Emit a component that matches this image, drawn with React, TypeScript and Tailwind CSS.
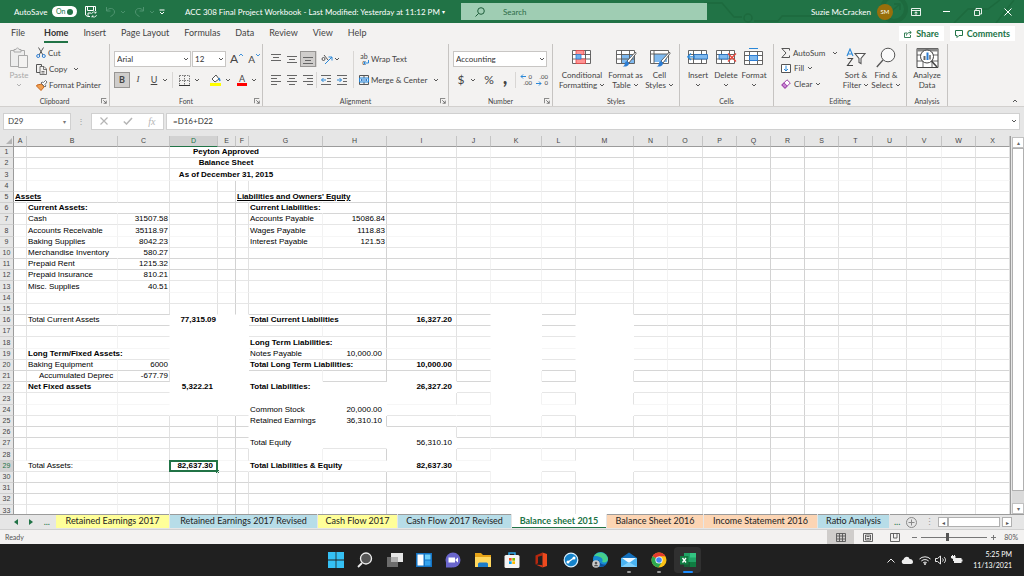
import type { ReactNode } from "react"
import clsx from "clsx"

/* ---------- small shared pieces ---------- */

const Chevron = ({ className }: { className?: string }) => (
  <svg viewBox="0 0 6 6" className={clsx("size-1.5 shrink-0", className)} fill="none" stroke="currentColor" strokeWidth=".9">
    <path d="M1 2l2 2 2-2" />
  </svg>
)

const Launcher = () => (
  <svg viewBox="0 0 8 8" className="size-1.5" fill="none" stroke="#555">
    <path d="M.5 7V.5H7M3 3l4 4M7 3.5V7H3.5" />
  </svg>
)

const Divider = () => <span className="h-4 w-px shrink-0 bg-[#d8d6d4]" />

interface GroupProps {
  label: string
  className: string
  launcher?: boolean
  children: ReactNode
}

const Group = ({ label, className, launcher, children }: GroupProps) => (
  <section className={clsx("relative flex shrink-0 flex-col border-r border-[#c6c4c2]", className)}>
    <div className="min-h-0 flex-1">{children}</div>
    <div className="text-center text-[7px] leading-[10px] text-[#444]">{label}</div>
    {launcher && (
      <button aria-label={`${label} settings`} className="absolute right-0.5 bottom-0.5">
        <Launcher />
      </button>
    )}
  </section>
)

interface BigButtonProps {
  lines: string[]
  icon: ReactNode
  className: string
  chevron?: "inline" | "below"
}

const BigButton = ({ lines, icon, className, chevron }: BigButtonProps) => (
  <button className={clsx("flex shrink-0 flex-col items-center whitespace-nowrap text-[8px] leading-[10px]", className)}>
    <span className="flex h-6 items-center">{icon}</span>
    {lines.map((line, i) => (
      <span key={line} className="flex items-center gap-0.5">
        {line}
        {chevron === "inline" && i === lines.length - 1 && <Chevron />}
      </span>
    ))}
    {chevron === "below" && <Chevron className="mt-0.5" />}
  </button>
)

interface DropProps {
  label: string
  value: string
  className: string
}

const Drop = ({ label, value, className }: DropProps) => (
  <span className={clsx("relative shrink-0", className)}>
    <select
      aria-label={label}
      className="h-4 w-full appearance-none border border-[#c8c6c4] bg-white px-0.5 text-[8px] leading-[13px] text-[#333]"
    >
      <option>{value}</option>
    </select>
    <Chevron className="pointer-events-none absolute top-[5px] right-0.5" />
  </span>
)

/* ---------- icons ---------- */

const Lines = ({ d, label, active }: { d: string; label: string; active?: boolean }) => (
  <button
    aria-label={label}
    className={clsx("flex size-4 shrink-0 items-center justify-center", active && "border border-[#979593] bg-[#cfcdcb]")}
  >
    <svg viewBox="0 0 10 10" className="size-2.5 shrink-0" stroke="#666" fill="none">
      <path d={d} />
    </svg>
  </button>
)

const PasteIcon = () => (
  <svg viewBox="0 0 20 22" className="h-[22px] w-5" fill="#ededed" stroke="#a9a9a9">
    <path d="M1.5 3.5h14v16h-14z" />
    <path d="M5 5V2.500h2C7 .5 10 .5 10 2.500h2V5z" />
    <path d="M9.500 8.500h9v12h-9z" fill="#f3f2f1" />
  </svg>
)

const CutIcon = () => (
  <svg viewBox="0 0 10 11" className="h-[11px] w-2.5" fill="none">
    <path d="M2.500.5l4.500 7.500M7.500.5L3 8" stroke="#555" />
    <circle cx="2.200" cy="9" r="1.500" stroke="#2b7cd3" />
    <circle cx="7.800" cy="9" r="1.500" stroke="#2b7cd3" />
  </svg>
)

const CopyIcon = () => (
  <svg viewBox="0 0 11 11" className="size-[11px]" fill="#f3f2f1" stroke="#555">
    <path d="M.5.5h5v8h-5z" />
    <path d="M4 2.500h4l2.500 2.500v5.500H4zM7.500 2.500v3h3M5.500 7.500h3M5.500 9h3" strokeWidth=".8" />
  </svg>
)

const PainterIcon = () => (
  <svg viewBox="0 0 12 11" className="h-[11px] w-3" fill="none">
    <path d="M1 5l5-1 2 3-3 3.500L.5 6z" fill="#f0a050" stroke="#c8661e" />
    <path d="M5 3l4 4 1-1-1-1.500L11 2 9.500.5 7.500 2.500 6 2z" fill="#fff" stroke="#555" strokeWidth=".8" />
  </svg>
)

const Grid = ({ children }: { children?: ReactNode }) => (
  <svg viewBox="0 0 22 20" className="h-5 w-[22px]" fill="none">
    <path d="M1.500 2.500h18v13h-18z" fill="#fff" />
    {children}
  </svg>
)

const gridLines = "M1.500 2.500h18v13h-18zM1.500 6.500h18M1.500 11h18M6.500 2.500v13M14.500 2.500v13"

const ConditionalIcon = () => (
  <Grid>
    <path d={gridLines} stroke="#555" strokeWidth=".9" />
    <path d="M5 2.500h8v4H5zM5 11h9.500v4.500H5z" fill="#ff9494" stroke="#e04848" strokeWidth=".8" />
    <path d="M5 6.500h5V11H5z" fill="#6fb0ea" stroke="#2b7cd3" strokeWidth=".8" />
  </Grid>
)

const brush = (
  <>
    <path d="M20.500 4L12 13l2 2 7-9.500z" fill="#fff" stroke="#555" strokeWidth=".9" />
    <path d="M12 13l2 2c0 3-3 4-6.500 3.500 2-.5 2-1.500 2.500-3.500.3-1 1-1.500 2-2z" fill="#2b7cd3" />
  </>
)

const TableStyleIcon = () => (
  <Grid>
    <path d="M7 7h12.500v8.500H7z" fill="#7fbaf0" />
    <path d={gridLines} stroke="#555" strokeWidth=".9" />
    {brush}
  </Grid>
)

const CellStyleIcon = () => (
  <Grid>
    <path d="M5 6h13v8H5z" fill="#7fbaf0" />
    <path d="M1.500 2.500h18v13h-18zM1.500 6h18M5 2.500v13" stroke="#555" strokeWidth=".9" />
    {brush}
  </Grid>
)

const InsertIcon = () => (
  <Grid>
    <path d={gridLines} stroke="#555" strokeWidth=".9" />
    <path d="M7 6.500h13.500V11H7z" fill="#7fbaf0" stroke="#1f6cbf" strokeWidth=".8" />
    <path d="M8 8.800H1M4 5.500L.8 8.800 4 12" stroke="#2b88d8" strokeWidth="1.300" />
  </Grid>
)

const DeleteIcon = () => (
  <Grid>
    <path d={gridLines} stroke="#555" strokeWidth=".9" />
    <path d="M4 6.500h9V11H4z" fill="#7fbaf0" stroke="#1f6cbf" strokeWidth=".8" />
    <path d="M13 5.500l8 8M21 5.500l-8 8" stroke="#e8443a" strokeWidth="1.300" />
  </Grid>
)

const FormatIcon = () => (
  <Grid>
    <path d="M1.500 3.500h18v13h-18z" fill="#fff" />
    <path d="M6 .5h9" stroke="#2b88d8" />
    <path d="M1.500 3.500h18v13h-18zM1.500 7.500h18M1.500 12.500h18M6.500 3.500v13M14.500 3.500v13" stroke="#555" strokeWidth=".9" />
    <path d="M6.500 7.500h8v5h-8z" fill="#7fbaf0" stroke="#2b7cd3" />
  </Grid>
)

const SortIcon = () => (
  <svg viewBox="0 0 20 20" className="size-5" fill="none" strokeWidth="1.100">
    <path d="M1 8l3-7 3 7M2 6h4" stroke="#2b88d8" />
    <path d="M1.500 10.500h5l-5 7h5.500" stroke="#444" />
    <path d="M9 5.500h10l-4 5v5l-2-1v-4z" fill="#fff" stroke="#555" />
  </svg>
)

const FindIcon = () => (
  <svg viewBox="0 0 20 22" className="h-[22px] w-5" fill="none" stroke="#555">
    <circle cx="12" cy="8" r="6.800" fill="#fafafa" />
    <path d="M7 13L.8 20" strokeWidth="1.300" />
  </svg>
)

const AnalyzeIcon = () => (
  <svg viewBox="0 0 23 22" className="h-[22px] w-[23px]" fill="none" stroke="#444">
    <path d="M1 1.500h21v19H1z" fill="#fff" />
    <path d="M1 3h21" strokeWidth="3" stroke="#888" />
    <path d="M1 8h21M1 14h21M7 5v16M16 5v16" strokeWidth=".8" />
    <circle cx="11" cy="9.500" r="6.500" fill="#fff" />
    <path d="M15.500 14l5.500 6" strokeWidth="1.600" />
    <path d="M8.500 9v4" strokeWidth="2" stroke="#666" />
    <path d="M11.500 5.500V13" strokeWidth="2" stroke="#2b7cd3" />
    <path d="M14 8v4.500" strokeWidth="1.500" stroke="#666" />
  </svg>
)

/* ---------- title bar and tabs ---------- */

const TitleBar = () => (
  <header className="relative flex h-[23px] shrink-0 items-center bg-[#217346] text-[8px] text-white">
    <svg className="absolute top-0 right-0 h-full w-[320px]" viewBox="0 0 320 23" fill="none" stroke="#1d6a3e" strokeWidth="1.500">
      <path d="M0 3h18l12 14h8M50 21h24l4-5h60M250 23l14-14h20l12-9M292 23l18-23" />
      <circle cx="44" cy="18" r="4" />
      <circle cx="190" cy="9" r="12" strokeWidth="4" />
      <path d="M184 14l12-10M190 4h6v6" />
    </svg>
    <div className="relative flex w-full items-center">
      <label htmlFor="autosave" className="ml-3.5 w-[34px] whitespace-nowrap">AutoSave</label>
      <button
        id="autosave"
        role="switch"
        aria-checked="true"
        className="ml-1 flex h-[11px] w-[25px] items-center justify-between rounded-full bg-white px-1 text-[7px] text-[#217346]"
      >
        On
        <span className="size-1.5 rounded-full bg-[#217346]" />
      </button>
      <button aria-label="Save" className="ml-2">
        <svg viewBox="0 0 12 12" className="size-3" fill="none" stroke="#fff">
          <path d="M5 10.500H2.500l-2-1.500V.5h10V5M2.500.5v4h6v-4M3 10V7h3" />
          <path d="M6.500 8a2.500 2.500 0 014.500-1M11 5.500V7H9.500M11.500 9a2.500 2.500 0 01-4.500 1M7 11.500V10h1.500" strokeWidth=".8" />
        </svg>
      </button>
      <div className="ml-2 flex items-center gap-1 text-[#4f9470]">
        <button aria-label="Undo">
          <svg viewBox="0 0 11 11" className="size-[11px]" fill="none" stroke="currentColor">
            <path d="M1.500 1v4h4M1.500 5C4 1 9.500 2 9.500 6c0 2-2 3.500-4 4.500" />
          </svg>
        </button>
        <Chevron />
        <button aria-label="Redo" className="ml-1">
          <svg viewBox="0 0 11 11" className="size-[11px]" fill="none" stroke="currentColor">
            <path d="M9.500 1v4h-4M9.500 5C7 1 1.500 2 1.500 6c0 2 2 3.500 4 4.500" />
          </svg>
        </button>
        <Chevron />
      </div>
      <button aria-label="Customize toolbar" className="ml-1">
        <svg viewBox="0 0 6 6" className="size-1.5" stroke="#fff" fill="none">
          <path d="M.5 1h5M1 3l2 2 2-2" />
        </svg>
      </button>
      <h1 className="ml-5 w-[257px] shrink-0 whitespace-nowrap">
        ACC 308 Final Project Workbook - Last Modified: Yesterday at 11:12 PM
      </h1>
      <span className="text-[6px]">▾</span>
      <label className="ml-4 flex h-[17px] w-[246px] shrink items-center bg-[#9fcdb3] text-[#1e5c3a]">
        <svg viewBox="0 0 10 10" className="mx-3.5 size-2.5 shrink-0" fill="none" stroke="currentColor">
          <circle cx="6" cy="4" r="3.300" />
          <path d="M3.500 6.500L.5 9.500" />
        </svg>
        <input type="search" aria-label="Search" placeholder="Search" className="w-full bg-transparent pl-1 placeholder:text-[#2c6b48]" />
      </label>
      <div className="ml-auto flex items-center">
        <span className="whitespace-nowrap">Suzie McCracken</span>
        <span className="ml-1.5 flex size-4 items-center justify-center rounded-full bg-[#986f0b] text-[6px]">SM</span>
        <button aria-label="Ribbon display" className="ml-[18px]">
          <svg viewBox="0 0 10 8" className="h-2 w-2.5" fill="none" stroke="#fff">
            <path d="M.5.5h9v7h-9zM.5 2.500h9M5 7V4M3.500 5L5 3.800 6.500 5" strokeWidth=".9" />
          </svg>
        </button>
        <button aria-label="Minimize" className="ml-[22px] h-px w-[7px] bg-white" />
        <button aria-label="Restore" className="ml-6">
          <svg viewBox="0 0 8 8" className="size-2" fill="none" stroke="#fff">
            <path d="M.5 2.500h5v5h-5zM2 2V.5h5.500V6H6" strokeWidth=".9" />
          </svg>
        </button>
        <button aria-label="Close" className="mr-3 ml-[22px]">
          <svg viewBox="0 0 8 8" className="size-2" stroke="#fff">
            <path d="M.5.5l7 7M7.500.5l-7 7" />
          </svg>
        </button>
      </div>
    </div>
  </header>
)

const menu = ["File", "Home", "Insert", "Page Layout", "Formulas", "Data", "Review", "View", "Help"]

const MenuTabs = () => (
  <nav className="flex h-[21px] shrink-0 items-center pl-[11px] text-[9px] text-[#444]">
    <div className="flex gap-[15px]">
      {menu.map((item) => (
        <button
          key={item}
          className={clsx(
            "h-[19px] whitespace-nowrap border-b-2",
            item === "Home" ? "ml-1 border-[#217346] font-bold text-[#333]" : "border-transparent",
          )}
        >
          {item}
        </button>
      ))}
    </div>
    <div className="mr-[9px] ml-auto flex gap-1.5 font-bold text-[#217346]">
      <button className="flex h-[15px] items-center gap-1 bg-white px-[5px]">
        <svg viewBox="0 0 8 8" className="size-2" fill="none" stroke="currentColor">
          <path d="M3 3H.5v4.500h6V5M2.500 5.500C2.500 3 4 2.500 7 2.500M5.500.8L7.300 2.500 5.500 4.200" strokeWidth=".9" />
        </svg>
        Share
      </button>
      <button className="flex h-[15px] items-center gap-1 bg-white px-[5px]">
        <svg viewBox="0 0 8 8" className="size-2" fill="none" stroke="currentColor">
          <path d="M.5.5h7v5H4L2 7.500v-2H.5z" />
        </svg>
        Comments
      </button>
    </div>
  </nav>
)

/* ---------- ribbon ---------- */

const Ribbon = () => (
  <div className="flex h-[63px] shrink-0 border-b border-[#d2d0ce] text-[8px] text-[#444]">
    <Group label="Clipboard" className="w-[110px]" launcher>
      <div className="flex pl-2">
        <button className="mt-[3px] flex w-[22px] flex-col items-center leading-[10px] text-[#a9a9a9]">
          <PasteIcon />
          <span className="mt-px">Paste</span>
          <Chevron className="mt-0.5" />
        </button>
        <div className="ml-1.5 flex flex-col items-start">
          <button className="flex h-[17px] items-center gap-0.5"><CutIcon />Cut</button>
          <button className="flex h-4 items-center gap-0.5"><CopyIcon />Copy<Chevron className="ml-1" /></button>
          <button className="flex h-4 items-center gap-px whitespace-nowrap"><PainterIcon />Format Painter</button>
        </div>
      </div>
    </Group>

    <Group label="Font" className="w-[153px]" launcher>
      <div className="flex items-center pt-[7px] pl-1">
        <Drop label="Font name" value="Arial" className="w-[77px]" />
        <Drop label="Font size" value="12" className="ml-px w-[34px]" />
        <button aria-label="Grow font" className="ml-1 flex items-start text-[12px] leading-[14px]">
          A<Chevron className="rotate-180 text-[#2b88d8]" />
        </button>
        <button aria-label="Shrink font" className="ml-1 flex items-start text-[10px] leading-[14px]">
          A<Chevron className="text-[#2b88d8]" />
        </button>
      </div>
      <div className="mt-[5px] flex items-center pl-1 text-[9px]">
        <button className="size-4 border border-[#979593] bg-[#cfcdcb] font-bold">B</button>
        <button className="w-4 font-['Liberation_Serif',serif] italic">I</button>
        <button className="w-4 underline">U</button>
        <Chevron />
        <span className="mx-1 flex"><Divider /></span>
        <button aria-label="Borders" className="ml-0.5">
          <svg viewBox="0 0 11 11" className="size-[11px]" fill="none" stroke="#777">
            <path d="M.5.5h10v10M.5.5v10M5.500.5v10M.5 5.500h10" strokeDasharray="1.500 1" />
            <path d="M0 10.500h11" stroke="#333" />
          </svg>
        </button>
        <Chevron className="ml-1" />
        <button aria-label="Fill color" className="ml-2.5">
          <svg viewBox="0 0 11 12" className="h-3 w-[11px]" fill="none">
            <path d="M2 5l4-4 3 4-4 3z" fill="#fff" stroke="#555" />
            <path d="M9 4l1 3" stroke="#2b88d8" strokeWidth="1.500" />
            <path d="M0 9h11v3H0z" fill="#ffff00" />
          </svg>
        </button>
        <Chevron className="ml-1" />
        <button aria-label="Font color" className="ml-1.5 h-3 w-2.5 border-b-[3px] border-[#f00] text-[9px] leading-[9px]">A</button>
        <Chevron className="ml-1" />
      </div>
    </Group>

    <Group label="Alignment" className="w-[186px]" launcher>
      <div className="flex">
        <div className="w-[90px] shrink-0 pt-[7px] pl-[5px]">
          <div className="flex items-center">
            <Lines label="Top align" d="M0 .5h10M2 3.500h6M0 6.500h10" />
            <Lines label="Middle align" d="M0 2.500h10M2 5.500h6M0 8.500h10" />
            <Lines label="Bottom align" active d="M0 3.500h10M2 6.500h6M0 9.500h10" />
            <Divider />
            <button aria-label="Orientation" className="ml-1">
              <svg viewBox="0 0 12 11" className="h-[11px] w-3" fill="none">
                <circle cx="2.500" cy="5" r="1.500" stroke="#555" />
                <path d="M3 1l4 5" stroke="#555" />
                <path d="M4 10l7-7M7.500 3H11v3.500" stroke="#2b88d8" />
              </svg>
            </button>
            <Chevron className="ml-px" />
          </div>
          <div className="mt-[5px] flex items-center">
            <Lines label="Align left" d="M0 .5h10M0 3.500h6M0 6.500h10M0 9.500h6" />
            <Lines label="Center" d="M0 .5h10M2 3.500h6M0 6.500h10M2 9.500h6" />
            <Lines label="Align right" d="M0 .5h10M4 3.500h6M0 6.500h10M4 9.500h6" />
            <Divider />
            <button aria-label="Decrease indent" className="ml-1">
              <svg viewBox="0 0 10 10" className="size-2.5" stroke="#666" fill="none">
                <path d="M0 .5h10M6 3.500h4M6 6.500h4M0 9.500h10" />
                <path d="M5 5H.5M2.500 3l-2 2 2 2" stroke="#2b88d8" />
              </svg>
            </button>
            <button aria-label="Increase indent" className="ml-1.5">
              <svg viewBox="0 0 10 10" className="size-2.5" stroke="#666" fill="none">
                <path d="M0 .5h10M6 3.500h4M6 6.500h4M0 9.500h10" />
                <path d="M0 5h4.500M2.500 3l2 2-2 2" stroke="#2b88d8" />
              </svg>
            </button>
          </div>
        </div>
        <div className="mt-[7px] flex h-[37px] flex-col justify-between border-l border-[#d8d6d4] pl-[5px]">
          <button className="flex h-4 items-center gap-0.5 whitespace-nowrap">
            <span className="relative w-2.5 text-[7px] leading-[6px]">
              ab<br />c
              <svg viewBox="0 0 6 5" className="absolute right-0 bottom-0 h-[5px] w-1.5" fill="none" stroke="#2b88d8">
                <path d="M5.500 0v3H1M2.500 1.500L1 3l1.500 1.500" />
              </svg>
            </span>
            Wrap Text
          </button>
          <button className="flex h-4 items-center gap-0.5 whitespace-nowrap">
            <svg viewBox="0 0 10 10" className="size-2.5" fill="none" stroke="#555">
              <path d="M.5.5h9v9h-9zM5 .5v9" />
              <path d="M.5 3h9v4h-9z" fill="#cde6fa" stroke="#2b88d8" />
              <path d="M2 5h6M3 4L2 5l1 1M7 4l1 1-1 1" stroke="#1f6cbf" strokeWidth=".8" />
            </svg>
            Merge &amp; Center
            <Chevron className="ml-1" />
          </button>
        </div>
      </div>
    </Group>

    <Group label="Number" className="w-[104px]" launcher>
      <div className="flex pt-[7px] pl-1">
        <Drop label="Number format" value="Accounting" className="w-[94px]" />
      </div>
      <div className="mt-[5px] flex h-4 items-center pl-2 text-[12px]">
        <button aria-label="Currency" className="w-2">$</button>
        <Chevron className="ml-[5px]" />
        <button aria-label="Percent" className="ml-[7px] w-3">%</button>
        <button aria-label="Comma style" className="mx-1 w-3 pb-2 text-[20px] leading-[12px] font-bold">,</button>
        <Divider />
        <button aria-label="Increase decimal" className="relative ml-1 w-3 text-right text-[6px] leading-[6px]">
          0<br />.00
          <svg viewBox="0 0 6 5" className="absolute top-0 left-0 h-[5px] w-1.5" fill="none" stroke="#2b88d8">
            <path d="M6 2.500H1M3 .5l-2 2 2 2" />
          </svg>
        </button>
        <button aria-label="Decrease decimal" className="relative ml-1 w-3 text-right text-[6px] leading-[6px]">
          .00<br />0
          <svg viewBox="0 0 6 5" className="absolute bottom-0 left-0 h-[5px] w-1.5" fill="none" stroke="#2b88d8">
            <path d="M0 2.500h5M3 .5l2 2-2 2" />
          </svg>
        </button>
      </div>
    </Group>

    <Group label="Styles" className="w-[127px]">
      <div className="flex pt-0.5 pl-1">
        <BigButton lines={["Conditional", "Formatting"]} icon={<ConditionalIcon />} chevron="inline" className="w-[50px]" />
        <BigButton lines={["Format as", "Table"]} icon={<TableStyleIcon />} chevron="inline" className="w-[37px]" />
        <BigButton lines={["Cell", "Styles"]} icon={<CellStyleIcon />} chevron="inline" className="w-[31px]" />
      </div>
    </Group>

    <Group label="Cells" className="w-[94px]">
      <div className="flex pt-0.5 pl-1">
        <BigButton lines={["Insert"]} icon={<InsertIcon />} chevron="below" className="w-7" />
        <BigButton lines={["Delete"]} icon={<DeleteIcon />} chevron="below" className="w-7" />
        <BigButton lines={["Format"]} icon={<FormatIcon />} chevron="below" className="w-7" />
      </div>
    </Group>

    <Group label="Editing" className="w-[133px]">
      <div className="flex pt-px pl-[7px]">
        <div className="flex w-[60px] flex-col items-start">
          <button className="flex h-[15px] items-center gap-[3px]">
            <svg viewBox="0 0 9 10" className="h-2.5 w-[9px]" fill="none" stroke="#555">
              <path d="M8.500 2.500v-2H.8L5 5 .8 9.500h7.700v-2" />
            </svg>
            AutoSum
            <Chevron className="ml-1" />
          </button>
          <button className="flex h-4 items-center gap-[3px]">
            <svg viewBox="0 0 10 9" className="h-[9px] w-2.5" fill="#fff" stroke="#555">
              <path d="M.5.5h9v8h-9z" />
              <path d="M5 1.500V7M3 5l2 2 2-2" stroke="#2b88d8" fill="none" />
            </svg>
            Fill
            <Chevron />
          </button>
          <button className="flex h-[15px] items-center gap-[3px]">
            <svg viewBox="0 0 10 10" className="size-2.5" stroke="#9b3fa8">
              <path d="M.8 6L6 .8 9.300 4 4 9.300z" fill="#fff" />
              <path d="M.8 6L3 3.800 6.200 7 4 9.300z" fill="#c884d2" />
            </svg>
            Clear
            <Chevron />
          </button>
        </div>
        <div className="flex pt-px">
          <BigButton lines={["Sort &", "Filter"]} icon={<SortIcon />} chevron="inline" className="w-[30px]" />
          <BigButton lines={["Find &", "Select"]} icon={<FindIcon />} chevron="inline" className="w-[30px]" />
        </div>
      </div>
    </Group>

    <Group label="Analysis" className="w-[41px]">
      <div className="flex justify-center pt-0.5">
        <BigButton lines={["Analyze", "Data"]} icon={<AnalyzeIcon />} className="w-10" />
      </div>
    </Group>
    <button aria-label="Collapse ribbon" className="mt-auto mr-1.5 mb-0.5 ml-auto">
      <Chevron className="rotate-180" />
    </button>
  </div>
)

const FormulaBar = () => (
  <div className="flex h-[29px] shrink-0 items-center bg-[#e6e6e6] pr-1 pb-px pl-[3px] text-[8px] text-[#444]">
    <label className="flex h-[17px] w-[68px] items-center border border-[#d0d0d0] bg-white pr-1">
      <input aria-label="Name box" defaultValue="D29" className="w-full px-1" />
      <span className="text-[6px] text-[#777]">▾</span>
    </label>
    <span className="w-5 text-center text-[#999]">⋮</span>
    <div className="flex h-[17px] w-[73px] items-center justify-around border border-[#d0d0d0] bg-white text-[#b5b5b5]">
      <button aria-label="Cancel">
        <svg viewBox="0 0 8 8" className="size-2" stroke="currentColor" strokeWidth="1.200"><path d="M.5.5l7 7M7.500.5l-7 7" /></svg>
      </button>
      <button aria-label="Enter">
        <svg viewBox="0 0 10 8" className="h-2 w-2.5" fill="none" stroke="currentColor" strokeWidth="1.500"><path d="M.8 4.500l2.700 2.500L9 1" /></svg>
      </button>
      <button aria-label="Insert function" className="font-['Liberation_Serif',serif] text-[10px] italic">fx</button>
    </div>
    <label className="ml-0.5 flex h-[17px] flex-1 items-center border border-[#d0d0d0] bg-white pr-0.5">
      <input aria-label="Formula" defaultValue="=D16+D22" className="w-full px-1.5 text-[8px] text-[#333]" />
      <Chevron />
    </label>
  </div>
)

/* ---------- worksheet ---------- */

const strong = "border-r-[#d2d2d2]"
const mid = "border-r-[#e2e2e2]"
const faint = "border-r-[#f2f2f2]"

const columns = [
  { id: "A", width: "w-[13px]", line: mid },
  { id: "B", width: "w-[91px]", line: faint },
  { id: "C", width: "w-[52px]", line: mid },
  { id: "D", width: "w-[48px]", line: mid },
  { id: "E", width: "w-[18px]", line: strong },
  { id: "F", width: "w-[13px]", line: mid },
  { id: "G", width: "w-[74px]", line: faint },
  { id: "H", width: "w-[64px]", line: strong },
  { id: "I", width: "w-[70px]", line: mid },
  { id: "J", width: "w-[34px]", line: faint },
  { id: "K", width: "w-[51px]", line: faint },
  { id: "L", width: "w-[34px]", line: mid },
  { id: "M", width: "w-[58px]", line: mid },
  { id: "N", width: "w-[34px]", line: faint },
  { id: "O", width: "w-[35px]", line: mid },
  { id: "P", width: "w-[34px]", line: mid },
  { id: "Q", width: "w-[34px]", line: strong },
  { id: "R", width: "w-[34px]", line: strong },
  { id: "S", width: "w-[34px]", line: mid },
  { id: "T", width: "w-[34px]", line: mid },
  { id: "U", width: "w-[34px]", line: mid },
  { id: "V", width: "w-[35px]", line: faint },
  { id: "W", width: "w-[34px]", line: mid },
  { id: "X", width: "", line: mid },
]

interface Cell {
  text: string
  style?: string
}

const bold = "font-bold"
const heading = "font-bold underline"
const num = "text-right"
const acct = "text-right pr-1"
const total = "text-right pr-1 font-bold"

const cells: Record<string, Cell> = {
  D1: { text: "Peyton Approved" },
  D2: { text: "Balance Sheet" },
  D3: { text: "As of December 31, 2015" },
  A5: { text: "Assets", style: heading },
  F5: { text: "Liabilities and Owners' Equity", style: heading },
  B6: { text: "Current Assets:", style: bold },
  G6: { text: "Current Liabilities:", style: bold },
  B7: { text: "Cash" },
  C7: { text: "31507.58", style: num },
  G7: { text: "Accounts Payable" },
  H7: { text: "15086.84", style: num },
  B8: { text: "Accounts Receivable" },
  C8: { text: "35118.97", style: num },
  G8: { text: "Wages Payable" },
  H8: { text: "1118.83", style: num },
  B9: { text: "Baking Supplies" },
  C9: { text: "8042.23", style: num },
  G9: { text: "Interest Payable" },
  H9: { text: "121.53", style: num },
  B10: { text: "Merchandise Inventory" },
  C10: { text: "580.27", style: num },
  B11: { text: "Prepaid Rent" },
  C11: { text: "1215.32", style: num },
  B12: { text: "Prepaid Insurance" },
  C12: { text: "810.21", style: num },
  B13: { text: "Misc. Supplies" },
  C13: { text: "40.51", style: num },
  B16: { text: "Total Current Assets" },
  D16: { text: "77,315.09", style: "text-right font-bold" },
  G16: { text: "Total Current Liabilities", style: bold },
  I16: { text: "16,327.20", style: total },
  G18: { text: "Long Term Liabilities:", style: bold },
  B19: { text: "Long Term/Fixed Assets:", style: bold },
  G19: { text: "Notes Payable" },
  H19: { text: "10,000.00", style: acct },
  B20: { text: "Baking Equipment" },
  C20: { text: "6000", style: num },
  G20: { text: "Total Long Term Liabilities:", style: bold },
  I20: { text: "10,000.00", style: total },
  B21: { text: "Accumulated Deprec", style: "pl-3" },
  C21: { text: "-677.79", style: num },
  B22: { text: "Net Fixed assets", style: bold },
  D22: { text: "5,322.21", style: total },
  G22: { text: "Total Liabilities:", style: bold },
  I22: { text: "26,327.20", style: total },
  G24: { text: "Common Stock" },
  H24: { text: "20,000.00", style: acct },
  G25: { text: "Retained Earnings" },
  H25: { text: "36,310.10", style: acct },
  G27: { text: "Total Equity" },
  I27: { text: "56,310.10", style: acct },
  B29: { text: "Total Assets:" },
  D29: { text: "82,637.30", style: total },
  G29: { text: "Total Liabilities & Equity", style: bold },
  I29: { text: "82,637.30", style: total },
}

const span = (from: number, to: number) => Array.from({ length: to - from + 1 }, (_, i) => from + i)

// White-filled cells lose the grid line below them or to their right.
const noBottom: Record<string, number[]> = {
  D: span(15, 23),
  E: span(15, 23),
  F: span(15, 23),
  G: span(21, 27),
  H: span(22, 26),
  I: [21, 22, 26, 27, 28],
  K: [...span(15, 24), 28, 29],
  M: [...span(15, 24), 28, 29],
}

const noRight: Record<string, number[]> = {
  A: [5, 29],
  B: [6, 10, 16, 19, 29],
  C: [16, 17, 18, 19, 20, 22, 23, 24],
  D: span(16, 24),
  E: span(16, 24),
  F: [5, ...span(16, 27), 29],
  G: [5, 6, 16, 18, 20, 22, 23, 24, 25, 26, 27, 29],
  H: [22, 23, 24, 26, 27, 29],
  I: [22, 24, 25, 27, 29],
  J: [...span(15, 20), 22, 24, 27, 29],
  K: [...span(15, 20), 22, 24, 27, 29],
  L: [...span(16, 20), 22, 24, 27, 29],
  M: [...span(16, 20), 22, 24, 27, 29],
}

const bottomLine = [
  "border-b-[#d6d6d6]",
  "border-b-[#d6d6d6]",
  "border-b-[#e6e6e6]",
  "border-b-[#f6f6f6]",
  "border-b-[#e6e6e6]",
]

const SheetRow = ({ row }: { row: number }) => {
  const isTitle = row <= 3
  return (
    <tr className={row % 5 === 3 ? "h-3" : "h-[11px]"}>
      <th
        className={clsx(
          "border-r border-b border-r-[#9b9b9b] border-b-[#cfcfcf] p-0 text-center text-[7px] leading-[10px] font-normal",
          row === 29 ? "bg-[#d2d2d2] text-[#217346]" : "bg-[#e6e6e6] text-[#444]",
        )}
      >
        {row}
      </th>
      {columns.map(({ id, line }) => {
        if (isTitle && (id === "E" || id === "F" || id === "G")) return null
        const cell = cells[`${id}${row}`]
        return (
          <td
            key={id}
            colSpan={isTitle && id === "D" ? 4 : 1}
            className={clsx(
              "relative border-r border-b py-0 whitespace-nowrap",
              isTitle && id === "D" ? "pr-10 text-center font-bold" : "px-px",
              cell?.style,
              noRight[id]?.includes(row) ? "border-r-transparent" : line,
              noBottom[id]?.includes(row) ? "border-b-transparent" : bottomLine[row % 5],
            )}
          >
            {cell?.text}
            {id === "D" && row === 29 && (
              <span className="pointer-events-none absolute -inset-px border-2 border-[#217346]">
                <span className="absolute -right-[3px] -bottom-[3px] size-[3px] bg-[#217346]" />
              </span>
            )}
          </td>
        )
      })}
    </tr>
  )
}

const Worksheet = () => (
  <main className="flex min-h-0 flex-1 bg-[#e6e6e6]">
    <div className="min-w-0 flex-1 overflow-hidden border-r border-[#9b9b9b] bg-white">
      <table className="w-full table-fixed border-separate border-spacing-0 font-['Liberation_Sans',Arial,sans-serif] text-[8px] leading-[10px] text-black">
        <thead>
          <tr className="h-[11px] bg-[#e6e6e6] text-[7px] leading-[10px] text-[#444]">
            <th className="w-3.5 border-r border-b border-[#9b9b9b] p-0">
              <svg viewBox="0 0 8 8" className="ml-auto size-2" fill="#b4b4b4"><path d="M7 1v6H1z" /></svg>
            </th>
            {columns.map(({ id, width }) => (
              <th
                key={id}
                className={clsx(
                  "border-r border-b border-r-[#c4c4c4] p-0 text-center font-normal",
                  width,
                  id === "D" ? "border-b-[#217346] bg-[#d2d2d2] text-[#217346]" : "border-b-[#9b9b9b]",
                )}
              >
                {id}
              </th>
            ))}
          </tr>
        </thead>
        <tbody>
          {span(1, 33).map((row) => (
            <SheetRow key={row} row={row} />
          ))}
        </tbody>
      </table>
    </div>
    <div className="ml-px flex w-3 shrink-0 flex-col pt-px text-center text-[6px] text-[#666]">
      <button aria-label="Scroll up" className="h-[11px] border border-[#c0c0c0] bg-white leading-[8px]">▴</button>
      <div className="flex-1 border border-[#b0b0b0] bg-white" />
      <div className="h-3 bg-[#dadada]" />
      <button aria-label="Scroll down" className="h-[11px] border border-[#c0c0c0] bg-white leading-[8px]">▾</button>
    </div>
  </main>
)

const plainTab = "border-t-[#9b9b9b] border-b-transparent"

const sheets = [
  { name: "Retained Earnings 2017", style: clsx(plainTab, "w-[113px] bg-[#ffff99]") },
  { name: "Retained Earnings 2017 Revised", style: clsx(plainTab, "w-[147px] bg-[#b7dde8]") },
  { name: "Cash Flow 2017", style: clsx(plainTab, "w-[79px] bg-[#ffff99]") },
  { name: "Cash Flow 2017 Revised", style: clsx(plainTab, "w-[113px] bg-[#b7dde8]") },
  { name: "Balance sheet 2015", style: "w-[94px] border-t-white border-b-[#217346] bg-white font-bold text-[#217346]" },
  { name: "Balance Sheet 2016", style: clsx(plainTab, "w-24 bg-[#fcd5b4]") },
  { name: "Income Statement 2016", style: clsx(plainTab, "w-[113px] bg-[#fcd5b4]") },
  { name: "Ratio Analysis", style: clsx(plainTab, "w-[71px] bg-[#b7dde8]") },
]

const SheetTabs = () => (
  <div className="flex h-4 shrink-0 items-start border-b border-[#d0d0d0] bg-[#e6e6e6] text-[9px] text-[#222]">
    <div className="flex h-[15px] w-14 shrink-0 items-center justify-between border-t border-[#9b9b9b] pr-1.5 pl-3.5 text-[#217346]">
      <button aria-label="Previous sheet">
        <svg viewBox="0 0 4 6" className="h-1.5 w-1" fill="currentColor"><path d="M4 0v6L0 3z" /></svg>
      </button>
      <button aria-label="Next sheet">
        <svg viewBox="0 0 4 6" className="h-1.5 w-1" fill="currentColor"><path d="M0 0v6l4-3z" /></svg>
      </button>
      <button>...</button>
    </div>
    {sheets.map(({ name, style }) => (
      <button
        key={name}
        className={clsx(
          "mr-px flex h-3.5 shrink-0 items-start justify-center border-t border-b whitespace-nowrap leading-[11px]",
          style,
        )}
      >
        {name}
      </button>
    ))}
    <div className="flex h-[15px] flex-1 items-center border-t border-[#9b9b9b] pl-1 text-[#217346]">
      <button>...</button>
      <button aria-label="New sheet" className="ml-1.5">
        <svg viewBox="0 0 11 11" className="size-[11px]" fill="none" stroke="#888"><circle cx="5.500" cy="5.500" r="5" /><path d="M5.500 2.500v6M2.500 5.500h6" /></svg>
      </button>
      <span className="ml-2 text-[#999]">⋮</span>
      <div className="mr-3 ml-auto flex h-2.5 w-[74px] text-[6px] leading-[7px] text-[#555]">
        <button aria-label="Scroll left" className="w-2.5 border border-[#b0b0b0] bg-white">◂</button>
        <div className="mr-0.5 flex-1 border border-[#b0b0b0] bg-white" />
        <button aria-label="Scroll right" className="w-2.5 border border-[#b0b0b0] bg-white">▸</button>
      </div>
    </div>
  </div>
)

const StatusBar = () => (
  <footer className="flex h-3.5 shrink-0 items-center bg-[#f3f2f1] pr-1.5 pl-[5px] text-[7px] text-[#555]">
    Ready
    <div className="ml-auto flex h-full items-center">
      <button aria-label="Normal view" className="flex h-full w-[27px] items-center justify-center bg-[#cfcdcb]">
        <svg viewBox="0 0 10 9" className="h-[9px] w-2.5" fill="none" stroke="#555"><path d="M.5.5h9v8h-9zM.5 3h9M.5 6h9M3.500.5v8M6.500.5v8" strokeWidth=".9" /></svg>
      </button>
      <button aria-label="Page layout view" className="flex h-full w-[27px] items-center justify-center">
        <svg viewBox="0 0 10 9" className="h-[9px] w-2.5" fill="none" stroke="#555"><path d="M.5.5h9v8h-9zM2.500 2h5v5h-5zM3.500 3.500h3M3.500 5.500h3" strokeWidth=".9" /></svg>
      </button>
      <button aria-label="Page break view" className="flex h-full w-[27px] items-center justify-center">
        <svg viewBox="0 0 10 9" className="h-[9px] w-2.5" fill="none" stroke="#555"><path d="M.5.5h9v8h-9zM3.500.5V5H7V.5" strokeWidth=".9" /></svg>
      </button>
      <button aria-label="Zoom out" className="ml-1 h-px w-[5px] bg-[#777]" />
      <input
        type="range"
        aria-label="Zoom"
        min={10}
        max={190}
        defaultValue={80}
        className="mx-1 h-2 w-[66px] appearance-none bg-transparent [&::-webkit-slider-runnable-track]:h-px [&::-webkit-slider-runnable-track]:bg-[#777] [&::-webkit-slider-thumb]:-mt-1 [&::-webkit-slider-thumb]:h-2 [&::-webkit-slider-thumb]:w-[3px] [&::-webkit-slider-thumb]:appearance-none [&::-webkit-slider-thumb]:bg-[#555]"
      />
      <button aria-label="Zoom in">
        <svg viewBox="0 0 5 5" className="size-[5px]" stroke="#777"><path d="M0 2.500h5M2.500 0v5" /></svg>
      </button>
      <span className="ml-2">80%</span>
    </div>
  </footer>
)

/* ---------- taskbar ---------- */

const apps: { name: string; art: ReactNode }[] = [
  {
    name: "Start",
    art: <path d="M0 0h7.600v7.600H0zM8.400 0H16v7.600H8.400zM0 8.400h7.600V16H0zM8.400 8.400H16V16H8.400z" fill="#35c1f5" />,
  },
  {
    name: "Search",
    art: (
      <>
        <circle cx="9" cy="6.500" r="5.500" fill="#555" stroke="#eee" strokeWidth="1.300" />
        <path d="M5 11l-4 4" stroke="#eee" strokeWidth="1.800" />
      </>
    ),
  },
  {
    name: "Task view",
    art: (
      <>
        <path d="M0 5h11v10H0z" fill="#6c6c6c" />
        <path d="M4 1h12v9H4z" fill="#e6e6e6" />
        <path d="M4 5h7v5H4z" fill="#b0b0b0" />
      </>
    ),
  },
  {
    name: "Widgets",
    art: (
      <>
        <path d="M0 1h16v14H0z" fill="#1574c4" />
        <path d="M1.500 2.500h6v11h-6z" fill="#fff" />
        <path d="M9 2.500h5.500v5H9z" fill="#6fd0fa" />
        <path d="M9 8.500h5.500v5H9z" fill="#35a3ee" />
      </>
    ),
  },
  {
    name: "Chat",
    art: (
      <>
        <circle cx="8" cy="8" r="7.500" fill="#6a66cc" />
        <path d="M1 9v6.500h6z" fill="#6a66cc" />
        <path d="M3.500 5.500H10v5H3.500zM10.500 7.500l2.500-2v5l-2.500-2z" fill="#fff" />
      </>
    ),
  },
  {
    name: "File Explorer",
    art: (
      <>
        <path d="M0 1h6l2 2h8v12H0z" fill="#e6a317" />
        <path d="M0 5h16v10H0z" fill="#ffd75e" />
        <path d="M3 15v-3c0-1 1-1.500 2-1.500h6c1 0 2 .5 2 1.500v3z" fill="#1d7cc9" />
      </>
    ),
  },
  {
    name: "Store",
    art: (
      <>
        <path d="M5 4V1h6v3" fill="none" stroke="#2fa6e8" strokeWidth="1.500" />
        <rect x=".5" y="3" width="15" height="13" rx="1.500" fill="#f4f4f4" />
        <path d="M5 6h2.700v2.700H5z" fill="#f25022" />
        <path d="M8.300 6H11v2.700H8.300z" fill="#7fba00" />
        <path d="M5 9.300h2.700V12H5z" fill="#00a4ef" />
        <path d="M8.300 9.300H11V12H8.300z" fill="#ffb900" />
      </>
    ),
  },
  {
    name: "Office",
    art: (
      <>
        <path d="M9.500.5L2.500 3.500v9l2.500-1.300V4.800l4.500-1.300z" fill="#b7280f" />
        <path d="M9.500.5L14 2v12l-4.500 1.500z" fill="#ef4a1e" />
        <path d="M2.500 12.500l7 .7v2.300z" fill="#d8391a" />
      </>
    ),
  },
  {
    name: "Support",
    art: (
      <>
        <circle cx="8" cy="8" r="6.800" fill="#1583cb" stroke="#d7efff" strokeWidth="1.200" />
        <path d="M4.500 10.500l7-5" stroke="#fff" strokeWidth="1.300" />
        <circle cx="5" cy="10" r="1.500" fill="#fff" />
        <circle cx="11" cy="6" r="1.500" fill="#fff" />
      </>
    ),
  },
  {
    name: "Edge",
    art: (
      <>
        <circle cx="8.500" cy="7.500" r="7.500" fill="#1689d2" />
        <path d="M2 4C6-2 15 0 16 7c0 3-3 4-6 3 2-3-1-6-8-6z" fill="#44cf8c" />
        <path d="M7 8c0 3 3 5 7 4.500-2 3-7 3-9 0-1-2 0-4 2-4.500z" fill="#0c4f9c" />
        <circle cx="4" cy="12" r="3.800" fill="#c9c9c9" />
        <circle cx="4" cy="11" r="1.300" fill="#555" />
        <path d="M1.800 14.200c.5-2 4-2 4.400 0z" fill="#555" />
      </>
    ),
  },
  {
    name: "Mail",
    art: (
      <>
        <path d="M0 6l8-5.500L16 6v9H0z" fill="#1470bd" />
        <path d="M0 6h16v9H0z" fill="#49b3f2" />
        <path d="M1 6h14l-7 5z" fill="#eef8ff" />
        <path d="M0 15l8-5 8 5z" fill="#7fd0fb" />
      </>
    ),
  },
  {
    name: "Chrome",
    art: (
      <>
        <circle cx="8" cy="8" r="7.500" fill="#fbc116" />
        <path d="M8 8L1.500 4.200A7.500 7.500 0 0114.500 4.200H8z" fill="#e33b2e" />
        <path d="M8 8L1.500 4.200A7.500 7.500 0 007.500 15.500L11 10z" fill="#2da94f" />
        <circle cx="8" cy="8" r="3.600" fill="#fff" />
        <circle cx="8" cy="8" r="2.800" fill="#4285f4" />
      </>
    ),
  },
  {
    name: "Excel",
    art: (
      <>
        <path d="M4 1h12v14H4z" fill="#21a366" />
        <path d="M10 1h6v4.500h-6z" fill="#33c481" />
        <path d="M4 10h6v5H4z" fill="#185c37" />
        <path d="M10 10h6v5h-6z" fill="#107c41" />
        <path d="M0 4h8.500v8.500H0z" fill="#107c41" />
        <path d="M2.500 6l3.500 4.500M6 6l-3.500 4.500" stroke="#fff" strokeWidth="1.300" />
      </>
    ),
  },
]

const marks: Record<string, string> = {
  Mail: "w-1 bg-[#9a9a9a]",
  Chrome: "w-1 bg-[#9a9a9a]",
  Excel: "w-2.5 bg-[#1a8cff]",
}

const Taskbar = () => (
  <div className="grid h-8 shrink-0 grid-cols-[1fr_auto_1fr] items-center bg-[#202020] text-white">
    <span />
    <div className="grid w-[381px] grid-cols-13 justify-items-center">
      {apps.map(({ name, art }) => (
        <button
          key={name}
          aria-label={name}
          className={clsx("relative flex h-[26px] w-[27px] items-center justify-center rounded-sm", name === "Excel" && "bg-[#303030]")}
        >
          <svg viewBox="0 0 16 16" className="size-4">{art}</svg>
          {marks[name] && <span className={clsx("absolute bottom-0 h-0.5 rounded-full", marks[name])} />}
        </button>
      ))}
    </div>
    <div className="flex items-center justify-end pr-3">
      <svg viewBox="0 0 8 5" className="h-[5px] w-2" fill="none" stroke="#eee"><path d="M.5 4.500L4 1l3.500 3.500" /></svg>
      <svg viewBox="0 0 12 8" className="ml-1.5 h-2 w-3" fill="#eee"><path d="M2.500 8a2.300 2.300 0 010-4.500C3.500 0 8 0 8.500 3 11 2.800 12 4.500 12 6c0 1.200-.8 2-2 2z" /></svg>
      <svg viewBox="0 0 12 10" className="ml-1.5 h-2.5 w-3" fill="none" stroke="#eee">
        <path d="M.5 4a8 8 0 0111 0M2.300 6a5.500 5.500 0 017.400 0M4.200 7.800a2.800 2.800 0 013.600 0" />
        <circle cx="6" cy="9" r=".6" fill="#eee" />
      </svg>
      <svg viewBox="0 0 12 10" className="ml-1 h-2.5 w-3" fill="none" stroke="#eee">
        <path d="M.5 3.500h2L5.500 1v8l-3-2.500h-2zM7.500 3.500c1 1 1 2 0 3M9 2c2 2 2 4 0 6" />
      </svg>
      <svg viewBox="0 0 12 10" className="ml-1 h-2.5 w-3" fill="#eee">
        <path d="M3 3h7.500v1.500h1v2h-1V8H3zM0 1h1V0h1v1h1V0h1v1h.5v2L3 4v2H2V4L0 3z" />
      </svg>
      <time className="ml-2.5 text-right text-[7px] leading-[11px]">
        5:25 PM
        <br />
        11/13/2021
      </time>
    </div>
  </div>
)

const App = () => (
  <div className="flex h-screen flex-col overflow-hidden bg-[#f3f2f1] font-[Lato,'Open_Sans',sans-serif]">
    <TitleBar />
    <MenuTabs />
    <Ribbon />
    <FormulaBar />
    <Worksheet />
    <SheetTabs />
    <StatusBar />
    <Taskbar />
  </div>
)

export default App
